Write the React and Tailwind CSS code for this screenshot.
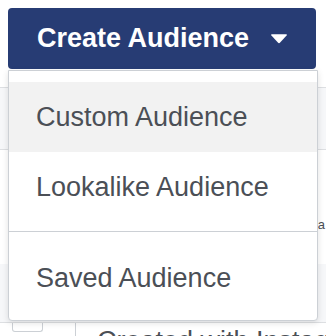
const ITEMS = [
  { label: "Custom Audience", active: true },
  { label: "Lookalike Audience" },
];

function Caret() {
  return (
    <svg width="18" height="11" viewBox="0 0 18 11" className="shrink-0">
      <path d="M2 1.2 H16 Q17.6 1.2 16.6 2.6 L10.1 9.6 Q9 10.7 7.9 9.6 L1.4 2.6 Q0.4 1.2 2 1.2 Z" fill="white" />
    </svg>
  );
}

export default function App() {
  return (
    <div className="relative w-[326px] h-[336px] overflow-hidden bg-white font-['Liberation_Sans',Arial,sans-serif]">
      {/* page header with button */}
      <div className="pl-2 pt-2">
        <button className="flex items-center h-[61px] w-[308px] pl-[29px] pr-[28px] rounded-[4px] bg-[#273c74] text-white text-[27px] font-bold">
          <span className="flex-1 text-left leading-none">Create Audience</span>
          <Caret />
        </button>
      </div>

      {/* table behind the menu */}
      <div className="mt-[18px] border-t border-[#dddfe2] h-[62px] bg-[#f6f7f9]" />
      <div className="border-t border-[#dddfe2] h-[115px] flex justify-end pt-[68px] pr-[1px]">
        <span className="text-[13px] text-[#4b4f56] leading-none">'a</span>
      </div>
      <div className="h-[58px] bg-[#f6f7f9]" />
      <div className="border-t border-[#dddfe2] flex items-start h-[20px] overflow-hidden">
        <div className="shrink-0 ml-3 w-[31px] h-[9px] border border-t-0 border-[#ccd0d5] rounded-b-[3px]" />
        <div className="shrink-0 ml-[32px] w-px h-full bg-[#ccd0d5]" />
        <span className="shrink-0 ml-[21px] mt-[5px] text-[27px] leading-none text-[#4b4f56] whitespace-nowrap">Created with Instagram</span>
      </div>

      {/* dropdown menu */}
      <div className="absolute left-2 top-[70px] w-[310px] h-[251px] bg-white border border-[#ccd0d5] rounded-b-[4px] shadow-[0_2px_6px_rgba(0,0,0,0.12)] pt-[11px] text-[27px] text-[#4b4f56]">
        {ITEMS.map(({ label, active }) => (
          <div
            key={label}
            className={`h-[70px] flex items-center px-[27px] leading-none ${active ? "bg-[#f2f2f2]" : ""}`}
          >
            {label}
          </div>
        ))}
        <div className="mt-[9px] mb-[11px] h-px bg-[#ccd0d5]" />
        <div className="h-[70px] flex items-center px-[27px] leading-none">Saved Audience</div>
      </div>
    </div>
  );
}
